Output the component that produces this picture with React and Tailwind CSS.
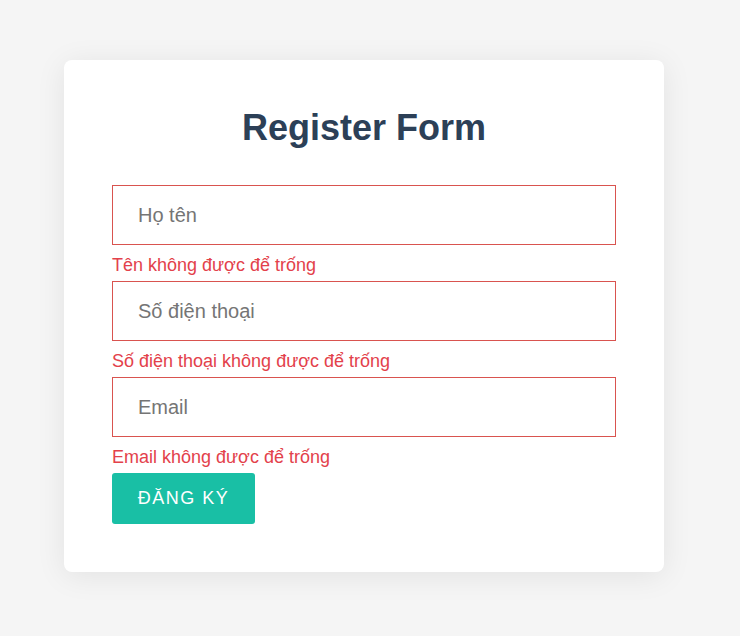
import React, { useState } from 'react';

const fields = [
  { name: 'name', placeholder: 'Họ tên', error: 'Tên không được để trống' },
  { name: 'phone', placeholder: 'Số điện thoại', error: 'Số điện thoại không được để trống' },
  { name: 'email', placeholder: 'Email', error: 'Email không được để trống' },
];

const App = () => {
  const [values, setValues] = useState({ name: '', phone: '', email: '' });

  return (
    <div
      className="min-h-screen w-full bg-[#f5f5f5] pt-[60px] pl-[64px]"
      style={{ fontFamily: '"Liberation Sans", Arial, sans-serif' }}
    >
      <div className="w-[600px] rounded-lg bg-white px-12 pt-12 pb-12 shadow-[0_4px_30px_rgba(0,0,0,0.08)]">
        <h1 className="text-center text-[36px] leading-[40px] font-bold text-[#2c4057]">Register Form</h1>

        <form className="mt-[37px]" onSubmit={(e) => e.preventDefault()}>
          {fields.map((f) => (
            <div key={f.name}>
              <input
                type="text"
                value={values[f.name]}
                onChange={(e) => setValues({ ...values, [f.name]: e.target.value })}
                placeholder={f.placeholder}
                className="block h-[60px] w-full border border-[#d9534f] bg-white px-[25px] text-[20px] text-[#333] outline-none placeholder:text-[#757575]"
              />
              <p className="h-[36px] pt-[9px] text-[18px] leading-[22px] text-[#e3414b]">{f.error}</p>
            </div>
          ))}

          {/* Submit */}
          <button
            type="submit"
            className="h-[51px] w-[143px] rounded-[3px] bg-[#19bfa5] text-[18px] tracking-[1.5px] text-white"
          >
            ĐĂNG KÝ
          </button>
        </form>
      </div>
    </div>
  );
};

export default App;
